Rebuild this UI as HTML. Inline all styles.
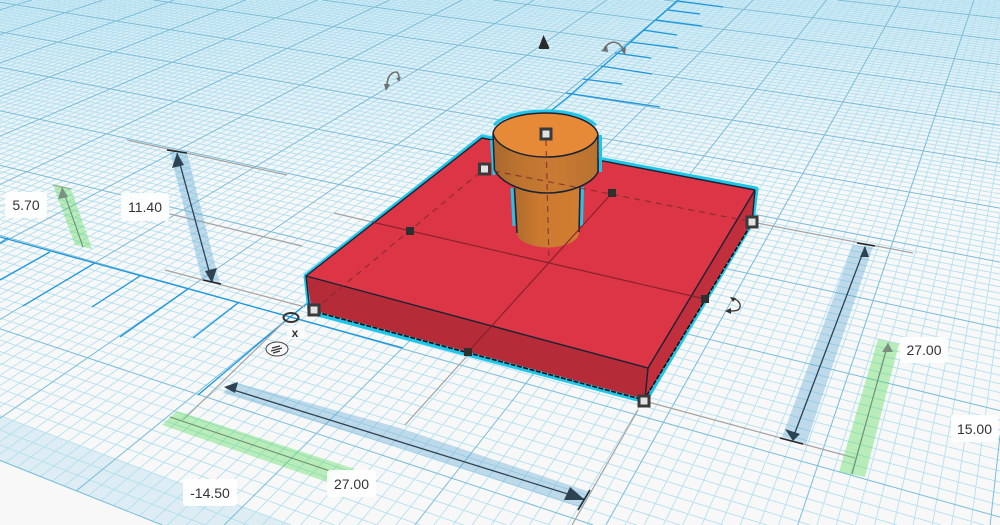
<!DOCTYPE html>
<html><head><meta charset="utf-8"><style>
html,body{margin:0;padding:0;width:1000px;height:525px;overflow:hidden;background:#f8f8f8}
svg{position:absolute;left:0;top:0;overflow:hidden}
.l{position:absolute;background:rgba(255,255,255,.93);border-radius:3px;font:14px/1 "Liberation Sans",sans-serif;color:#333;display:flex;align-items:center;justify-content:center}
</style></head><body>
<svg width="1000" height="525" viewBox="0 0 1000 525" xmlns="http://www.w3.org/2000/svg">
<defs>
<linearGradient id="bd" x1="0" x2="1" y1="0" y2="0"><stop offset="0" stop-color="#a9682d"/><stop offset=".25" stop-color="#bd7430"/><stop offset=".6" stop-color="#c97b33"/><stop offset="1" stop-color="#b87230"/></linearGradient>
<linearGradient id="st" x1="0" x2="1" y1="0" y2="0"><stop offset="0" stop-color="#b06b2d"/><stop offset=".4" stop-color="#cc7a30"/><stop offset="1" stop-color="#d07d31"/></linearGradient>
<linearGradient id="far" x1="0" x2="0" y1="0" y2="1"><stop offset="0" stop-color="#a9dcef" stop-opacity=".5"/><stop offset="1" stop-color="#a9dcef" stop-opacity="0"/></linearGradient>
</defs>
<rect x="0" y="0" width="1000" height="190" fill="url(#far)"/>
<polygon id="band" fill="#a5d8ea" fill-opacity=".32"/>
<path id="minor" fill="none" stroke="#b0dff0" stroke-width=".85"/>
<path id="major" fill="none" stroke="#78bddb" stroke-width="1"/>
<g stroke="#1b97dd" stroke-width="1.3" fill="none">
<path d="M0 237L403 348M198 395L290 317L567 98L678 0"/>
<path d="M50 252L0 280M95 263L23 306M140 276L92 307M188 289L120 337M238 303L193 338M8 238L0 243"/>
<path d="M678 1L723 7M668 10L700 14M656 20L702 26M643 30L677 35M630 42L678 48M615 53L651 58M601 66L652 74M583 79L622 84M566 93L660 107"/>
</g>
<g stroke="#a3a3a3" stroke-width="1.2" fill="none">
<path d="M127 140L287 175M170 214L302 246M165 270L305 307M334 213L372 222M53 185L71 189M757 223L913 253M648 402L855 458M283 323L183 420M638 410L572 525M468 355L405 425"/>
</g>
<g fill="#5ea9d2" fill-opacity=".38">
<polygon points="170,152 187,153 220,284 202,280"/>
<polygon points="853,245 873,247 806,444 782,437"/>
<polygon points="233,382 400,428 590,492 582,508 400,448 223,393"/>
</g>
<g fill="#5fdc62" fill-opacity=".42">
<polygon points="53,185 71,189 92,249 75,245"/>
<polygon points="878,339 899,344 865,477 839,472"/>
<polygon points="177,411 355,469 327,482 162,425"/>
</g>
<g stroke="#6f8c74" stroke-width="1.1" fill="none"><path d="M62 187L83 247M888 343L852 474M170 417L333 472"/></g>
<g fill="#7b8f82"><polygon points="62,187 58,199 68,197"/><polygon points="888,343 882,352 893,352"/></g>
<g stroke="#2e4352" stroke-width="1.3" fill="none"><path d="M177 153L212 282M865 247L793 438M227 388L584 499"/></g>
<g fill="#2e4352"><polygon points="177,153 172,168 184,165"/><polygon points="212,283 205,271 217,268"/><polygon points="865,246 860,257 869,257"/><polygon points="793,441 785,429 800,434"/><polygon points="224,387 238,382 235,393"/><polygon points="585,500 570,487 564,500"/></g>
<g stroke="#22262a" stroke-width="1.5" fill="none"><path d="M167 150L187 153M203 280L221 284M857 243L875 246M780 438L803 444M590 490L578 510"/></g>
<!-- box -->
<g stroke="#1fc6ea" stroke-width="5" stroke-linejoin="round" fill="none"><path d="M310 312L306 276L482 137L756 189L752 222L645 401Z"/></g>
<polygon points="306,276 482,138 755,190 648,368" fill="#dc3545"/>
<polygon points="306,276 648,368 645,399 312,310" fill="#b62b38"/>
<polygon points="648,368 755,190 752,222 645,399" fill="#c12e3c"/>
<g stroke="#1a2233" stroke-width="1.4" fill="none"><path d="M310 312L306 276L482 138L755 190M306 276L648 368L755 190M648 368L645 399M755 190L752 222"/></g>
<g stroke="#111" stroke-width="1.6" stroke-dasharray="5 1.5" fill="none"><path d="M316 312L644 400L752 223"/></g>
<!-- stem -->
<path d="M514 188L517 233A31 15 0 0 0 579 232L580 187Z" fill="url(#st)"/>
<g stroke="#1fc6ea" stroke-width="3" fill="none"><path d="M512 188L514 226M582.500 187L581.500 226"/></g>
<g stroke="#1a2233" stroke-width="1.5" fill="none"><path d="M514.500 188L517 233M580 187L579 232"/></g>
<!-- cap body -->
<path d="M493 133L495 170C502 184 525 193 547 193C570 193 592 184 598 172L598 135C590 150 570 157 546 157C520 157 500 148 493 133Z" fill="url(#bd)"/>
<path d="M493 133C496 120 520 113 546 113C572 113 596 122 598 135C594 149 570 157 546 157C520 157 496 147 493 133Z" fill="#e68a37"/>
<g stroke="#1fc6ea" stroke-width="3" fill="none"><path d="M494 125C502 116 522 111 546 111C566 111 584 115 596 125M491.500 140L494 175M600.500 135L600.500 172"/></g>
<g stroke="#1a2233" stroke-width="1.5" fill="none"><path d="M493 133C496 120 520 113 546 113C572 113 596 122 598 135C594 149 570 157 546 157C520 157 496 147 493 133L494.500 170C502 184 525 193 547 193C570 193 592 184 598 172L598 135"/></g>
<!-- guides on box -->
<g stroke="#7a1e2a" stroke-opacity=".85" stroke-width="1.2" fill="none"><path d="M372 222L705 299M612 193L468 352"/></g>
<g stroke="#7d2a30" stroke-opacity=".8" stroke-width="1.2" stroke-dasharray="6 5" fill="none"><path d="M314 310L484 169L752 222M546 140L549 262"/></g>
<!-- handles -->
<g fill="#e2e2e2" stroke="#3a3a3a" stroke-width="3">
<rect x="309" y="305" width="10" height="10"/><rect x="639" y="396" width="10" height="10"/><rect x="747" y="217" width="10" height="10"/><rect x="479.500" y="164" width="10" height="10"/><rect x="541" y="129" width="10" height="10"/>
</g>
<g fill="#2f2f2f"><rect x="406" y="227" width="8" height="8"/><rect x="608" y="189" width="8" height="8"/><rect x="701" y="295" width="8" height="8"/><rect x="464" y="348" width="8" height="8"/></g>
<!-- icons -->
<path d="M543.500 35L539 47Q538 49 540 49L548 49Q550 49 549 47Z" fill="#2b2b2b"/>
<g fill="none" stroke="#6f6f6f" stroke-width="1.6"><path d="M604 49C608 41 619 38 624 52"/><path d="M387 86C387 76 392 72 396 72C398 72 399 75 399 78"/></g>
<g fill="#6f6f6f"><polygon points="601,51 607,46 608,52"/><polygon points="621,50 626,47 625,55"/><polygon points="384,84 390,84 386,91"/><polygon points="396,78 401,77 399,82"/></g>
<path d="M732 299C739 299 743 306 738 310C736 311 732 311 729 311" fill="none" stroke="#333" stroke-width="1.3"/>
<polygon points="730,297 736,298 733,302" fill="#333"/><polygon points="725,311 731,308 731,314" fill="#333"/>
<ellipse cx="291" cy="317.500" rx="7.500" ry="4.500" fill="none" stroke="#333" stroke-width="2"/>
<rect x="287" y="326" width="18" height="13" rx="3" fill="#fff" fill-opacity=".75"/>
<ellipse cx="277" cy="349" rx="11" ry="7" fill="#f8f8f8" fill-opacity=".8" stroke="#444" stroke-width="1"/>
<g stroke="#333" stroke-width="1.2"><path d="M272 348L280 346M271 351L282 348M273 353L280 351"/></g>
<text x="295" y="337" font-family="Liberation Sans, sans-serif" font-size="12" font-weight="bold" fill="#333" text-anchor="middle">x</text>
</svg>
<div class="l" style="left:5px;top:192px;width:42px;height:26px">5.70</div>
<div class="l" style="left:121px;top:193px;width:48px;height:28px">11.40</div>
<div class="l" style="left:183px;top:479px;width:54px;height:27px">-14.50</div>
<div class="l" style="left:327px;top:470px;width:49px;height:27px">27.00</div>
<div class="l" style="left:900px;top:337px;width:48px;height:26px">27.00</div>
<div class="l" style="left:951px;top:415px;width:47px;height:27px">15.00</div>
<script>
(function(){
var a=247.27,b=307.03,c=314,d=39.49,e=-93.15,f=310,g=-.12846,h=.28311,W=1000,H=525;
function P(U,V){var u=U/27,v=V/27,w=g*u+h*v+1;return [(a*u+b*v+c)/w,(d*u+e*v+f)/w];}
function seg(p,q){
  var t0=0,t1=1,dx=q[0]-p[0],dy=q[1]-p[1],ps=[-dx,dx,-dy,dy],qs=[p[0],W-p[0],p[1],H-p[1]];
  for(var k=0;k<4;k++){
    if(ps[k]===0){if(qs[k]<0)return '';continue;}
    var r=qs[k]/ps[k];
    if(ps[k]<0){if(r>t1)return '';if(r>t0)t0=r;}else{if(r<t0)return '';if(r<t1)t1=r;}
  }
  return 'M'+(p[0]+t0*dx).toFixed(1)+' '+(p[1]+t0*dy).toFixed(1)+'L'+(p[0]+t1*dx).toFixed(1)+' '+(p[1]+t1*dy).toFixed(1);
}
function clipPoly(pts){
  var tests=[[function(p){return p[0]>=0;},0,0],[function(p){return p[0]<=W;},0,W],[function(p){return p[1]>=0;},1,0],[function(p){return p[1]<=H;},1,H]];
  tests.forEach(function(T){
    var out=[];
    for(var i=0;i<pts.length;i++){
      var A=pts[i],B=pts[(i+1)%pts.length],ia=T[0](A),ib=T[0](B);
      if(ia)out.push(A);
      if(ia!==ib){var s=(T[2]-A[T[1]])/(B[T[1]]-A[T[1]]);out.push([A[0]+s*(B[0]-A[0]),A[1]+s*(B[1]-A[1])]);}
    }
    pts=out;
  });
  return pts;
}
var U0=-1.08,V0=-1.51,Vlo=V0-20,Vhi=V0+300,Ulo=U0-300,Uhi=U0+120;
var mi='',ma='',i,t,s;
for(i=-300;i<=120;i++){t=U0+i;s=seg(P(t,Vlo),P(t,Vhi));if(i%10===0)ma+=s;else mi+=s;}
for(i=-20;i<=300;i++){t=V0+i;s=seg(P(Ulo,t),P(Uhi,t));if(i%10===0)ma+=s;else mi+=s;}
document.getElementById('minor').setAttribute('d',mi);
document.getElementById('major').setAttribute('d',ma);
var bp=clipPoly([P(Ulo,Vlo),P(Uhi,Vlo),P(Uhi,Vlo+3),P(Ulo,Vlo+3)]);
document.getElementById('band').setAttribute('points',bp.map(function(p){return p[0].toFixed(1)+','+p[1].toFixed(1);}).join(' '));
})();
</script>
</body></html>
